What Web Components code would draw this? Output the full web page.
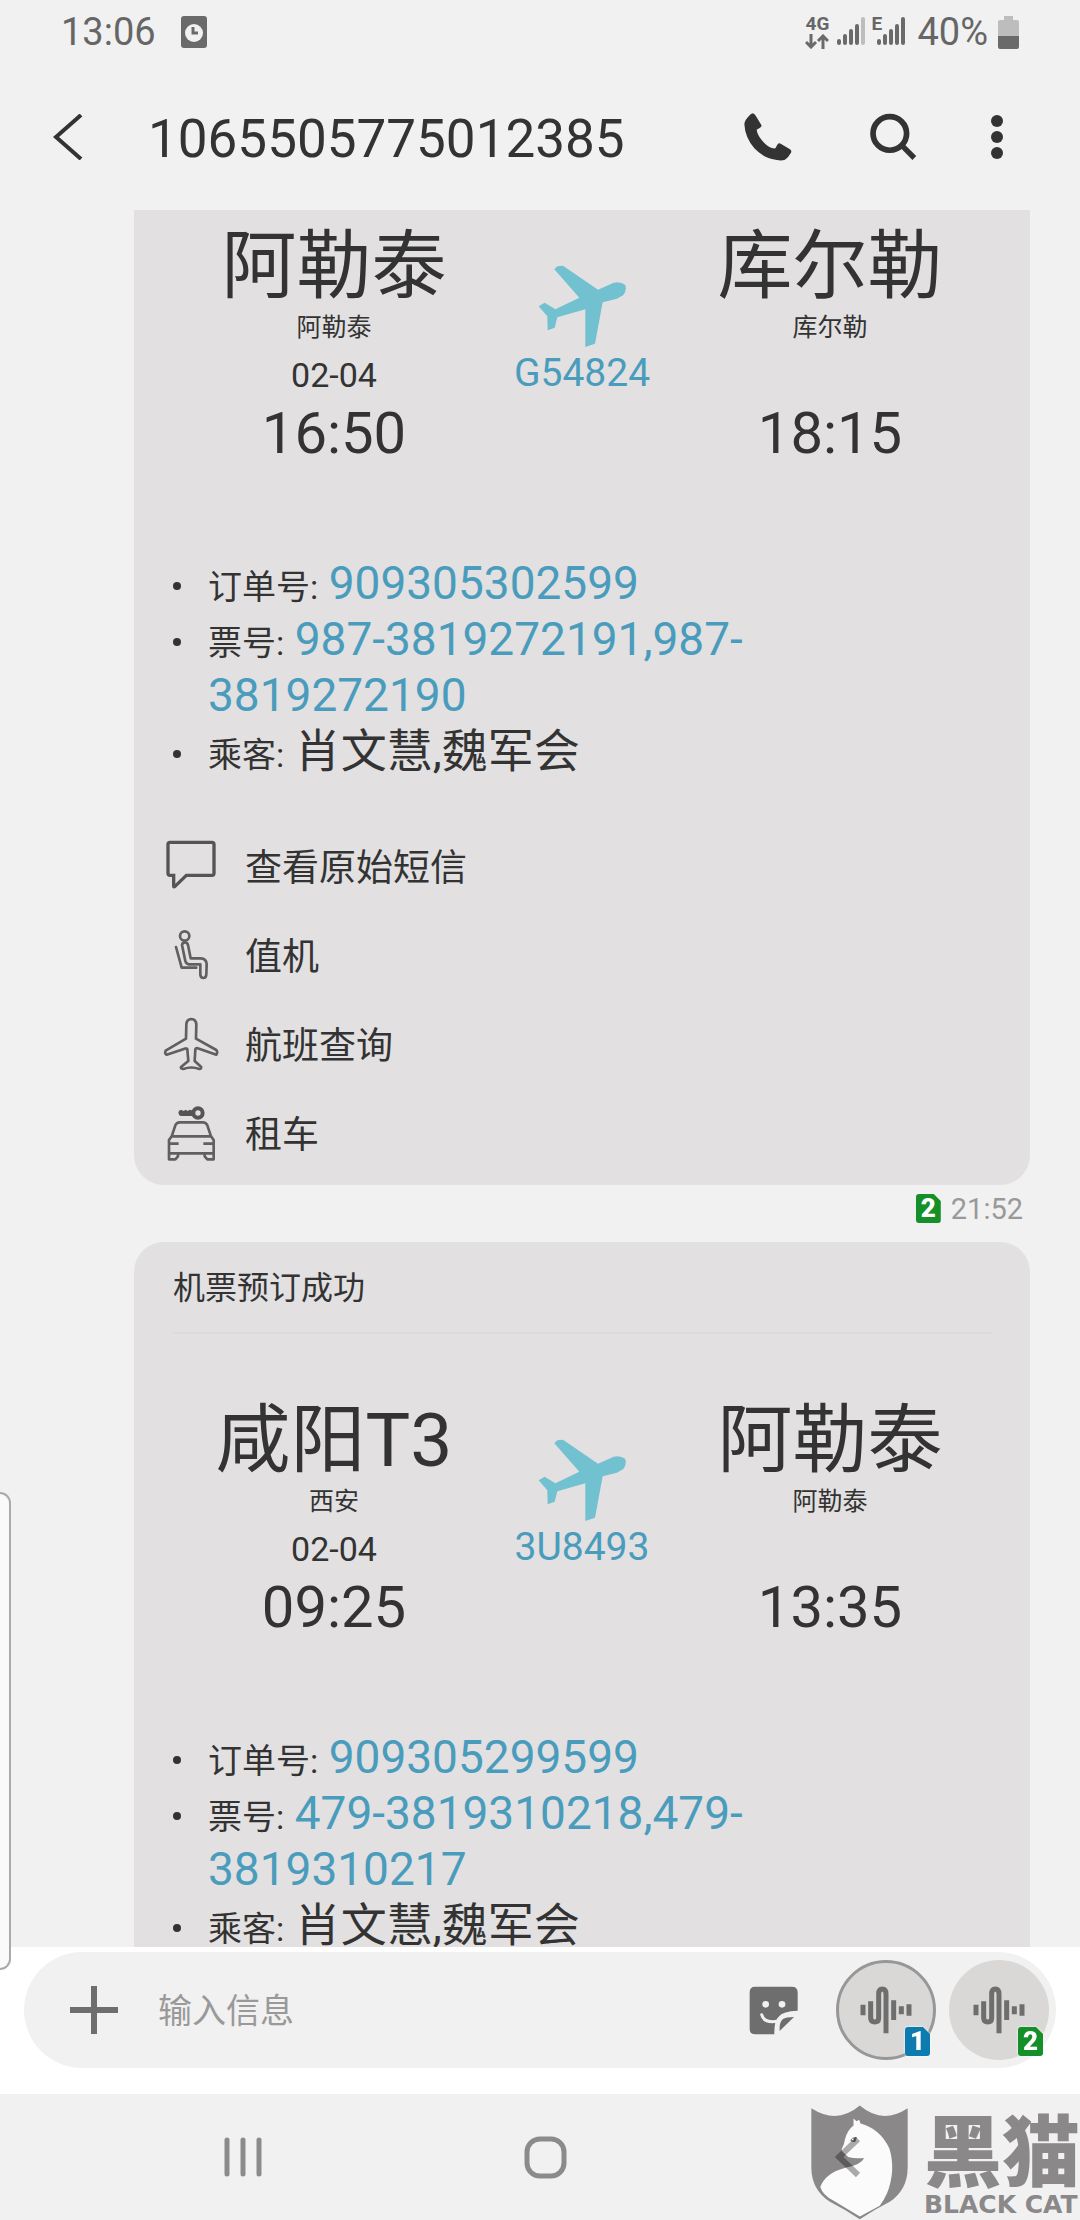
<!DOCTYPE html>
<html lang="zh-CN">
<head>
<meta charset="utf-8">
<meta name="viewport" content="width=device-width, initial-scale=1">
<title>1065505775012385</title>
<style>
html, body { margin: 0; height: 100%; }
body { font-family: Roboto, "Noto Sans CJK SC", sans-serif; color: #333; background: #f1f1f1; }
</style>
</head>
<body>
<sms-app></sms-app>
<script>
const define = (name, html, setup) => {
  const template = document.createElement('template');
  template.innerHTML = '<style>*{box-sizing:border-box}button{border:0;padding:0;margin:0;background:none;font:inherit;color:inherit;cursor:pointer}svg{display:block}</style>' + html;
  customElements.define(name, class extends HTMLElement {
    constructor() {
      super();
      this.attachShadow({ mode: 'open' }).append(template.content.cloneNode(true));
    }
    connectedCallback() { if (setup) setup(this, this.shadowRoot); }
  });
};

const svg = (w, h, box, body) => `<svg width="${w}" height="${h}" viewBox="${box}" fill="none" aria-hidden="true">${body}</svg>`;
const bars = last => `<path d="M2 25v2M8 20v7M14 15v12M20 10v17" stroke="#6a6a6a" stroke-width="4" stroke-linecap="round"/><path d="M26 3v24" stroke="${last}" stroke-width="4" stroke-linecap="round"/>`;
const icons = {
  clock: svg(26, 32, '0 0 26 32', '<rect width="26" height="32" rx="3" fill="#6a6a6a"/><circle cx="13" cy="17" r="9" fill="#f1f1f1"/><path d="M12 11v6h5" stroke="#6a6a6a" stroke-width="3"/>'),
  signal: svg(28, 30, '0 0 28 30', bars('#bdbdbd')),
  signalFull: svg(28, 30, '0 0 28 30', bars('#6a6a6a')),
  data: svg(24, 15, '0 0 24 15', '<path d="M6 0v12M1 8l5 5 5-5M18 15V3M13 7l5-5 5 5" stroke="#6a6a6a" stroke-width="3"/>'),
  battery: svg(21, 33, '0 0 21 33', '<path d="M6 0h9v4h4q2 0 2 2v15H0V6q0-2 2-2h4z" fill="#bdbdbd"/><path d="M0 20h21v11q0 2-2 2H2q-2 0-2-2z" fill="#6a6a6a"/>'),
  back: svg(30, 46, '0 0 30 46', '<path d="M28 1 3 23 28 45" stroke="#333" stroke-width="4"/>'),
  phone: svg(48, 48, '44 337 144 144', '<path d="M70 338Q76 339 81 348L96 373Q98 378 92 381L82 387Q84 405 105 427 122 445 138 443L144 432Q148 426 154 429L182 446Q188 450 185 456 178 469 167 477 157 481 143 478 103 473 75 443 47 410 45 370 46 360 58 347 66 338 70 338Z" fill="#333"/>'),
  search: svg(47, 48, '424 337 140 143', '<circle cx="483" cy="398" r="50" stroke="#333" stroke-width="17"/><path d="M518 433 556 471" stroke="#333" stroke-width="16"/>'),
  dots: svg(12, 44, '0 0 12 44', '<g fill="#333"><circle cx="6" cy="6" r="6"/><circle cx="6" cy="22" r="6"/><circle cx="6" cy="38" r="6"/></g>'),
  plane: svg(90, 85, '110 40 270 255', '<path d="M162 59 171 50 188 48 293 120 340 99Q360 94 374 105 381 119 369 136L350 147 307 158 284 282 255 292V179L171 203 163 234 142 242 141 200 115 170 133 159 165 179 237 144Z" fill="#71c1d1"/>'),
  bubble: svg(56, 56, '100 85 168 168', '<path d="M121 98H247Q253 98 253 104V191Q253 197 247 197H170L136 230Q132 234 132 229V197H121Q115 197 115 191V104Q115 98 121 98Z" stroke="#555" stroke-width="10"/>'),
  seat: svg(56, 56, '100 350 168 168', '<g stroke="#606060" stroke-width="8" stroke-linejoin="round" stroke-linecap="round"><circle cx="165" cy="377" r="14"/><path d="M139 410 156 472H200M157 404Q158 396 166 396 173 396 175 404L183 444H213Q230 445 231 461L230 493Q229 503 221 503 213 503 212 493V462H178Q169 461 167 452Z"/></g>'),
  flight: svg(56, 56, '100 615 168 168', '<path d="M170 640Q171 625 185 624 199 625 200 640L199 683 260 717Q265 724 260 731L204 712Q197 710 197 716L195 750 214 767Q216 774 209 774Q185 765 161 774 152 773 154 768L176 750 173 716Q173 711 165 713L111 731Q104 728 108 719L169 683Z" stroke="#606060" stroke-width="8" stroke-linejoin="round"/>'),
  car: svg(56, 56, '100 882 168 168', '<g stroke="#606060" stroke-width="8" stroke-linejoin="round"><path d="M126 976 137 943Q141 934 150 934H220Q229 934 233 943L244 976M126 976H244L252 987V1027H118V987ZM118 998H147M252 998H221M118 1027V1045H137L145 1036V1027M252 1027V1045H233L225 1036V1027"/></g><circle cx="205" cy="906" r="14" stroke="#555" stroke-width="12"/><path d="M192 915H153Q146 912 146 904 148 896 156 897L162 900 168 896 174 900 180 896 192 899Z" fill="#555"/>'),
  plus: svg(48, 48, '0 0 48 48', '<path d="M24 0v48M0 24h48" stroke="#6e6e6e" stroke-width="6"/>'),
  sticker: svg(49, 49, '144 197 147 147', '<path d="M162 199H273Q290 199 290 216V271Q245 272 233 289 219 301 220 342H162Q146 342 146 326V216Q146 199 162 199Z" fill="#6e6e6e"/><path d="M182 283Q189 309 228 303" stroke="#f1f1f1" stroke-width="9" stroke-linecap="round"/><circle cx="194" cy="252" r="10" fill="#f1f1f1"/><circle cx="243" cy="252" r="10" fill="#f1f1f1"/><path d="M236 332Q234 307 245 297 255 290 279 290Z" fill="#6e6e6e"/>'),
  voice: svg(52, 48, '482 200 156 144', '<path d="M491 256V288M583 243V302M606 261V285M629 255V289" stroke="#6e6e6e" stroke-width="15"/><path d="M514 246V297Q515 308 526 308 538 308 538 297V224Q538 209 549 209 560 209 560 224V342" stroke="#6e6e6e" stroke-width="15"/>'),
  recents: svg(38, 42, '0 0 38 42', '<path d="M3 4v34M19 4v34M35 4v34" stroke="#8b8b8b" stroke-width="5" stroke-linecap="round"/>'),
  home: svg(44, 44, '0 0 44 44', '<rect x="4" y="4" width="37" height="37" rx="13" stroke="#8b8b8b" stroke-width="5"/>'),
  navBack: svg(26, 42, '0 0 26 42', '<path d="M23 3 4 21 23 39" stroke="#000" stroke-opacity=".32" stroke-width="6"/>'),
  shield: svg(97, 115, '93 75 292 345', '<path d="M94 84Q172 134 240 76 308 134 384 84V262Q384 330 330 366 280 392 240 418 200 392 150 366 94 330 94 262Z" fill="#8a8889"/><path d="M221 115 230 123 238 119 242 130Q300 145 329 205 349 270 322 340 312 362 300 378L240 410 160 362Q128 345 121 321 137 279 194 264 244 255 253 234 225 237 205 231L188 215Q183 210 188 201 193 193 195 178 202 150 221 136Z" fill="#fbfbfb"/><path d="M211 181Q219 168 231 172L227 184Q219 189 211 181Z" fill="#777"/><circle cx="219" cy="178" r="3" fill="#fff"/>')
};

define('ui-icon', '<style>:host{display:block;flex:none}</style>', (el, root) => {
  root.innerHTML = '<style>:host{display:block;flex:none}svg{display:block}</style>' + icons[el.getAttribute('name')];
});

define('sim-badge', `<style>
:host{display:block;flex:none;width:25px;height:29px}
span{display:block;height:29px;border-radius:3px;background:var(--sim,#159028);clip-path:polygon(0 0,72% 0,100% 24%,100% 100%,0 100%);
color:#fff;font:900 26px/29px Roboto,sans-serif;text-align:center}
</style><span><slot></slot></span>`);

define('status-bar', `<style>
:host{display:flex;align-items:center;justify-content:space-between;height:64px;padding:0 61px;color:#666;font-size:38px;line-height:44px}
div{display:flex;align-items:center}
.left{gap:25px}.right{gap:12px}
.net{display:flex;flex-direction:column;font-size:19px;line-height:16px;font-weight:700;height:32px;gap:2px}
.cell{gap:8px;align-items:flex-start}.cell.e{gap:0;margin-left:-5px}
.e .net{width:9px}.e ui-icon{margin-left:-4px}
.right>ui-icon{margin-left:-2px}
</style>
<div class="left"><span>13:06</span><ui-icon name="clock"></ui-icon></div>
<div class="right">
<div class="cell"><div class="net"><span>4G</span><ui-icon name="data"></ui-icon></div><ui-icon name="signal"></ui-icon></div>
<div class="cell e"><div class="net"><span>E</span></div><ui-icon name="signalFull"></ui-icon></div>
<span>40%</span><ui-icon name="battery"></ui-icon></div>`);

define('app-header', `<style>
:host{display:flex;align-items:center;height:146px;padding:0 77px 0 53px}
h1{flex:1;margin:0 0 0 65px;padding-top:4px;font-size:53px;line-height:64px;font-weight:400}
nav{display:flex;align-items:center;gap:74px}
nav button:nth-child(2){margin-left:4px}
</style>
<button aria-label="返回"><ui-icon name="back"></ui-icon></button>
<h1><slot></slot></h1>
<nav><button aria-label="拨打电话"><ui-icon name="phone"></ui-icon></button>
<button aria-label="搜索"><ui-icon name="search"></ui-icon></button>
<button aria-label="更多"><ui-icon name="dots"></ui-icon></button></nav>`);

define('flight-stop', `<style>
:host{display:flex;flex-direction:column;align-items:center;white-space:nowrap}
.city{font-size:75px;line-height:88px}
.place{font-size:25px;line-height:36px}
.date{font-size:34px;line-height:59px;height:59px}
.time{font-size:58px;line-height:56px}
</style>
<span class="city"></span><span class="place"></span><span class="date"></span><span class="time"></span>`, (el, root) => {
  for (const key of ['city', 'place', 'date', 'time']) root.querySelector('.' + key).textContent = el.getAttribute(key) || '';
});

define('flight-route', `<style>
:host{display:grid;grid-template-columns:1fr 176px 1fr;padding:62px 40px 94px}
.mid{display:flex;flex-direction:column;align-items:center;gap:2px;padding-top:41px}
a{color:#4a9cbc;font-size:39px;line-height:46px;text-decoration:none}
</style>
<slot name="from"></slot>
<div class="mid"><ui-icon name="plane"></ui-icon><a href="#"></a></div>
<slot name="to"></slot>`, (el, root) => { root.querySelector('a').textContent = el.getAttribute('code'); });

define('ticket-details', `<style>
:host{display:block;padding:0 38px 0 39px}
ul{list-style:none;margin:0;padding:0}
li{display:flex}
li::before{content:"";flex:none;width:8px;height:8px;margin:27px 27px 0 0;border-radius:50%;background:#333}
p{margin:0;font-size:46px;line-height:56px}
span{padding-right:2px;font-size:34px;line-height:36px}
a{color:#4a9cbc;text-decoration:none}
b{font-weight:400;line-height:50px}
</style>
<ul><li><p><span>订单号: </span><a href="#" class="order"></a></p></li>
<li><p><span>票号: </span><a href="#" class="ticket"></a></p></li>
<li><p><span>乘客: </span><b class="people"></b></p></li></ul>`, (el, root) => {
  for (const key of ['order', 'ticket', 'people']) root.querySelector('.' + key).textContent = el.getAttribute(key);
});

define('card-action', `<style>
:host{display:block}
button{display:flex;align-items:center;width:100%;height:89px;padding-left:29px;gap:26px;font-size:37px;line-height:50px;text-align:left}
ui-icon{padding-bottom:3px}
span{padding-top:2px}
</style><button><ui-icon></ui-icon><span><slot></slot></span></button>`, (el, root) => {
  const icon = root.querySelector('ui-icon');
  const fresh = document.createElement('ui-icon');
  fresh.setAttribute('name', el.getAttribute('icon'));
  icon.replaceWith(fresh);
});

define('message-card', `<style>
:host{display:block;flex:none;margin:0 50px 0 134px;border-radius:30px;background:#e2e0e1;overflow:hidden}
:host([continued]){border-top-left-radius:0;border-top-right-radius:0}
:host([continued]) header{display:none}
header{margin:0 38px 0 39px;height:92px;border-bottom:2px solid #dddbdc;font-size:32px;line-height:92px}
</style><header><slot name="title"></slot></header><slot></slot>`);

define('message-meta', `<style>
:host{display:flex;flex:none;align-items:center;justify-content:flex-end;gap:10px;height:57px;padding:0 57px 10px 0;color:#999;font-size:29px;line-height:36px}
</style><sim-badge>2</sim-badge><time><slot></slot></time>`);

define('message-list', `<style>
:host{display:flex;flex-direction:column;flex:1 1 0;min-height:0;overflow:hidden}
.actions{padding:44px 0 6px}
message-card:last-child{padding-bottom:44px}
</style>
<message-card continued>
<flight-route code="G54824" style="padding-top:12px"><flight-stop slot="from" city="阿勒泰" place="阿勒泰" date="02-04" time="16:50"></flight-stop><flight-stop slot="to" city="库尔勒" place="库尔勒" time="18:15"></flight-stop></flight-route>
<ticket-details order="909305302599" ticket="987-3819272191,987-3819272190" people="肖文慧,魏军会"></ticket-details>
<div class="actions"><card-action icon="bubble">查看原始短信</card-action><card-action icon="seat">值机</card-action><card-action icon="flight">航班查询</card-action><card-action icon="car">租车</card-action></div>
</message-card>
<message-meta>21:52</message-meta>
<message-card><span slot="title">机票预订成功</span>
<flight-route code="3U8493"><flight-stop slot="from" city="咸阳T3" place="西安" date="02-04" time="09:25"></flight-stop><flight-stop slot="to" city="阿勒泰" place="阿勒泰" time="13:35"></flight-stop></flight-route>
<ticket-details order="909305299599" ticket="479-3819310218,479-3819310217" people="肖文慧,魏军会"></ticket-details>
</message-card>`);

define('voice-button', `<style>
:host{display:block;flex:none}
button{position:relative;display:flex;align-items:center;justify-content:center;width:100px;height:100px;border-radius:50%;background:#d9d8d7}
:host([selected]) button{border:3px solid #979797}
sim-badge{position:absolute;right:6px;bottom:4px;filter:drop-shadow(0 0 1px #fff)}
:host([selected]) sim-badge{right:3px;bottom:1px}
</style><button aria-label="语音发送"><ui-icon name="voice"></ui-icon><sim-badge><slot></slot></sim-badge></button>`);

define('message-composer', `<style>
:host{display:block;background:#fff;padding:5px 24px 26px}
form{display:flex;align-items:center;height:116px;border-radius:58px;background:#f1f1f1;padding:0 7px 0 46px}
label{display:flex;flex:1;min-width:0}
input{flex:1;min-width:0;margin:0 0 0 40px;padding:2px 0 0;border:0;outline:0;background:none;font:34px/50px Roboto,"Noto Sans CJK SC",sans-serif;color:#333}
input::placeholder{color:#999;opacity:1}
.send{display:flex;gap:13px;margin-left:38px}
</style>
<form><button type="button" aria-label="添加"><ui-icon name="plus"></ui-icon></button>
<label><input type="text" aria-label="输入信息" placeholder="输入信息"></label>
<button type="button" aria-label="表情贴图"><ui-icon name="sticker"></ui-icon></button>
<div class="send"><voice-button selected style="--sim:#0c7bb0">1</voice-button><voice-button>2</voice-button></div></form>`);

define('brand-mark', `<style>
:host{position:absolute;right:0;bottom:0;display:flex;align-items:flex-end;gap:16px;color:#8a8889}
div{display:flex;flex-direction:column;width:156px;white-space:nowrap}
.cn{font:900 78px/86px "Noto Sans CJK SC",sans-serif}
.en{font:700 25px/30px "DejaVu Sans",sans-serif}
</style><ui-icon name="shield"></ui-icon><div><span class="cn">黑猫</span><span class="en">BLACK CAT</span></div>`);

define('nav-bar', `<style>
:host{position:relative;display:grid;grid-template-columns:repeat(3,1fr);align-items:center;height:126px;padding:0 81px 0 92px;background:#f1f1f1}
button{display:flex;align-items:center;justify-content:center;height:126px}
button:last-child{position:relative}
</style>
<button aria-label="最近任务"><ui-icon name="recents"></ui-icon></button>
<button aria-label="主屏幕"><ui-icon name="home"></ui-icon></button>
<brand-mark></brand-mark>
<button aria-label="返回"><ui-icon name="navBack"></ui-icon></button>`);

define('edge-panel', `<style>
:host{position:absolute;left:0;bottom:250px;width:11px;height:478px;background:#fafafa;border:2px solid #aaa;border-left:0;border-radius:0 14px 14px 0;box-sizing:border-box}
</style>`);

define('sms-app', `<style>
:host{position:relative;display:flex;flex-direction:column;min-height:100vh}
</style>
<status-bar></status-bar>
<app-header>1065505775012385</app-header>
<message-list></message-list>
<message-composer></message-composer>
<nav-bar></nav-bar>
<edge-panel></edge-panel>`);
</script>
</body>
</html>
